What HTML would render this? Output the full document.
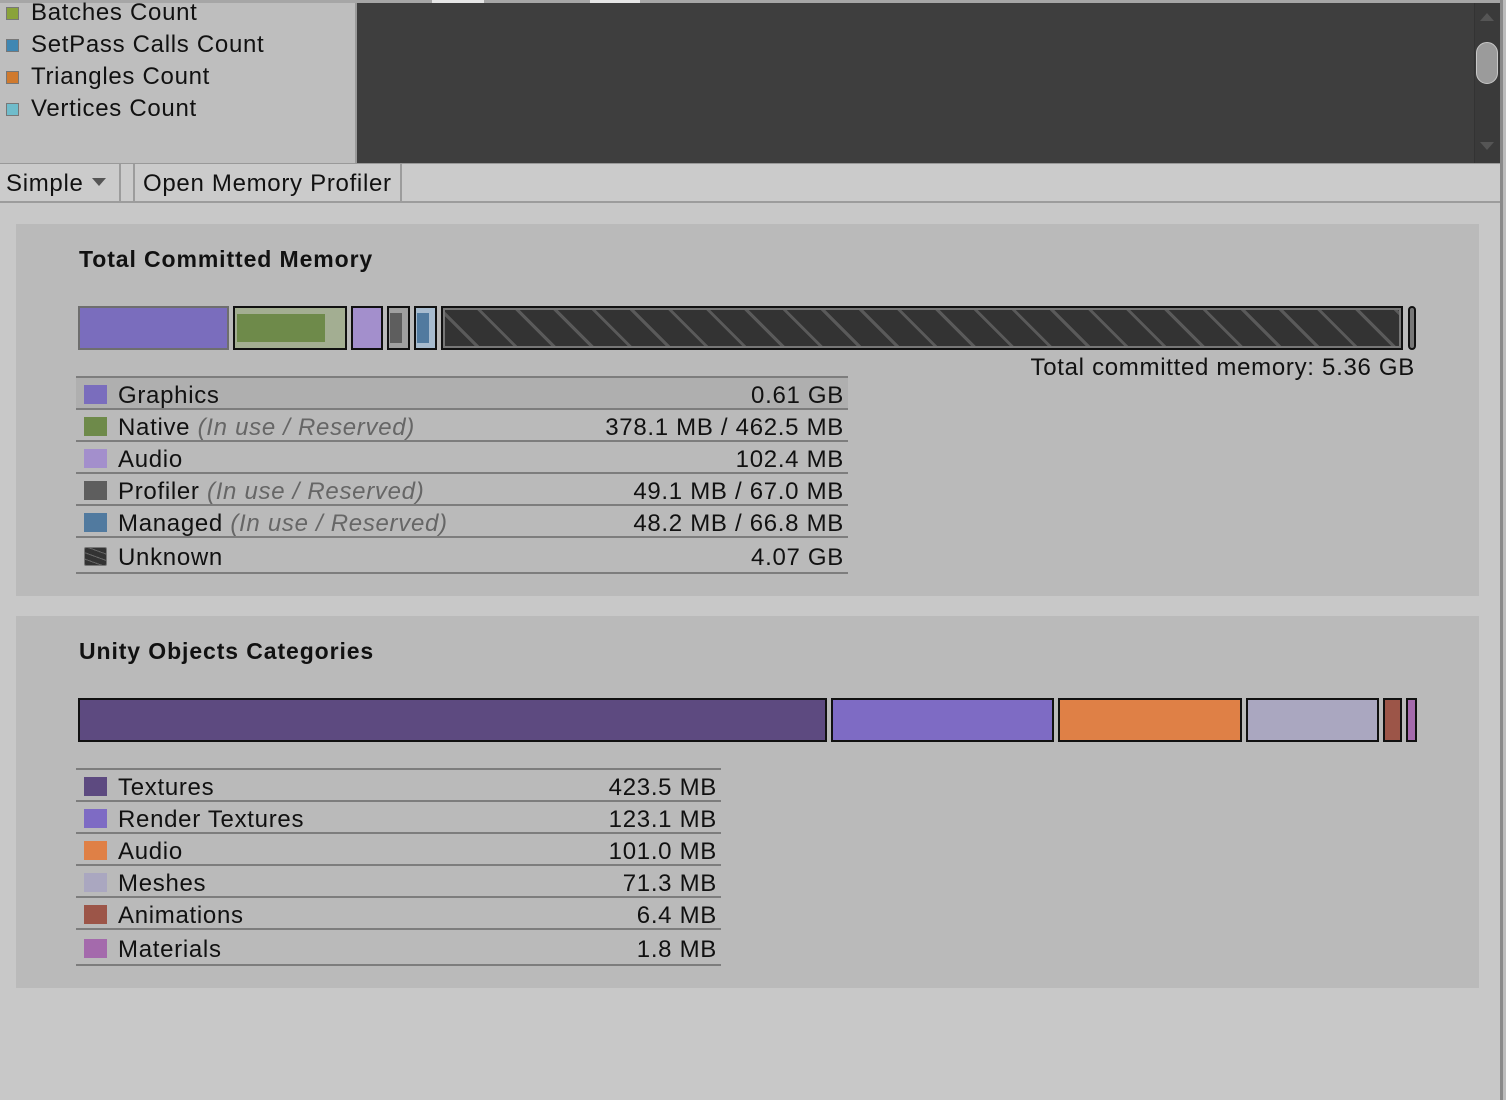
<!DOCTYPE html>
<html><head><meta charset="utf-8"><style>
*{margin:0;padding:0;box-sizing:border-box}
body{width:1506px;height:1100px;overflow:hidden;background:#c8c8c8;font-family:"Liberation Sans",sans-serif;color:#111;position:relative}
.a{position:absolute}
.t{font-size:24px;line-height:32px;white-space:nowrap;letter-spacing:0.7px}
.sw{position:absolute;width:13px;height:13px;border:1px solid #777}
.row{position:absolute;height:32px;border-bottom:2px solid #7d7d7d}
.row .n{position:absolute;left:42px;top:2px;font-size:24px;line-height:32px;white-space:nowrap;letter-spacing:0.7px}
.row .v{position:absolute;right:4px;top:2px;font-size:24px;line-height:32px;white-space:nowrap;letter-spacing:0.7px}
.row .c{position:absolute;left:8px;top:7px;width:23px;height:19px}
.i{color:#666;font-style:italic}
.seg{position:absolute;border:2px solid #111}
</style></head><body>
<div class="a" style="left:0;top:0;width:1506px;height:3px;background:#a6a6a6"></div>
<div class="a" style="left:432px;top:0;width:52px;height:3px;background:#e6e6e6"></div>
<div class="a" style="left:590px;top:0;width:50px;height:3px;background:#e6e6e6"></div>
<div class="a" style="left:0;top:3px;width:355px;height:160px;background:#bebebe"></div>
<div class="a" style="left:355px;top:3px;width:2px;height:160px;background:#9a9a9a"></div>
<div class="sw" style="left:6px;top:7px;background:#8aa33a"></div>
<div class="a t" style="left:31px;top:-3px">Batches Count</div>
<div class="sw" style="left:6px;top:39px;background:#3f87b3"></div>
<div class="a t" style="left:31px;top:29px">SetPass Calls Count</div>
<div class="sw" style="left:6px;top:71px;background:#d07a2e"></div>
<div class="a t" style="left:31px;top:61px">Triangles Count</div>
<div class="sw" style="left:6px;top:103px;background:#6fbccb"></div>
<div class="a t" style="left:31px;top:93px">Vertices Count</div>
<div class="a" style="left:357px;top:3px;width:1143px;height:160px;background:#3e3e3e"></div>
<div class="a" style="left:1474px;top:3px;width:26px;height:160px;background:#3a3a3a;border-left:1px solid #333"></div>
<div class="a" style="left:1480px;top:13px;width:0;height:0;border-left:7px solid transparent;border-right:7px solid transparent;border-bottom:8px solid #555"></div>
<div class="a" style="left:1480px;top:142px;width:0;height:0;border-left:7px solid transparent;border-right:7px solid transparent;border-top:8px solid #555"></div>
<div class="a" style="left:1476px;top:42px;width:22px;height:42px;background:#9b9b9b;border:1px solid #c8c8c8;border-radius:11px"></div>
<div class="a" style="left:1500px;top:0;width:3px;height:1100px;background:#8a8a8a"></div>
<div class="a" style="left:1503px;top:0;width:3px;height:1100px;background:#bdbdbd"></div>
<div class="a" style="left:0;top:163px;width:1500px;height:40px;background:#cbcbcb;border-top:1px solid #999;border-bottom:2px solid #9c9c9c"></div>
<div class="a t" style="left:6px;top:168px">Simple</div>
<div class="a" style="left:92px;top:178px;width:0;height:0;border-left:7px solid transparent;border-right:7px solid transparent;border-top:8px solid #555"></div>
<div class="a" style="left:119px;top:164px;width:2px;height:38px;background:#9c9c9c"></div>
<div class="a" style="left:133px;top:164px;width:2px;height:38px;background:#9c9c9c"></div>
<div class="a t" style="left:143px;top:168px">Open Memory Profiler</div>
<div class="a" style="left:400px;top:164px;width:2px;height:38px;background:#9c9c9c"></div>

<div class="a" style="left:16px;top:224px;width:1463px;height:372px;background:#bababa"></div>
<div class="a" style="left:79px;top:245px;font-size:23px;font-weight:bold;line-height:28px;letter-spacing:0.9px">Total Committed Memory</div>
<div class="seg" style="left:78px;top:306px;width:151px;height:44px;background:#7a6dbd;border-color:#6e6e6e"></div>
<div class="seg" style="left:233px;top:306px;width:114px;height:44px;background:#a3ae92"><div class="a" style="left:2px;top:6px;width:88px;height:28px;background:#6e8a4a"></div></div>
<div class="seg" style="left:351px;top:306px;width:32px;height:44px;background:#a38fcc"></div>
<div class="seg" style="left:387px;top:306px;width:23px;height:44px;background:#a0a0a0"><div class="a" style="left:1px;top:5px;width:12px;height:30px;background:#5e5e5e"></div></div>
<div class="seg" style="left:414px;top:306px;width:23px;height:44px;background:#a8bccf"><div class="a" style="left:1px;top:5px;width:12px;height:30px;background:#517a9f"></div></div>
<div class="seg" style="left:441px;top:306px;width:962px;height:44px;background:repeating-linear-gradient(45deg,#333 0 24px,#5a5a5a 24px 27px);box-shadow:inset 0 0 0 2px #777"></div>
<div class="a" style="left:1408px;top:306px;width:8px;height:44px;background:#777;border:2px solid #111;border-radius:4px"></div>
<div class="a t" style="right:91px;top:352px">Total committed memory: 5.36 GB</div>

<div class="a" style="left:76px;top:376px;width:772px;height:2px;background:#7d7d7d"></div>
<div class="row" style="left:76px;top:378px;width:772px;background:#afafaf"><div class="c" style="background:#7a6dbd"></div><div class="n">Graphics</div><div class="v">0.61 GB</div></div>
<div class="row" style="left:76px;top:410px;width:772px"><div class="c" style="background:#6e8a4a"></div><div class="n">Native <span class="i">(In use / Reserved)</span></div><div class="v">378.1 MB / 462.5 MB</div></div>
<div class="row" style="left:76px;top:442px;width:772px"><div class="c" style="background:#a38fcc"></div><div class="n">Audio</div><div class="v">102.4 MB</div></div>
<div class="row" style="left:76px;top:474px;width:772px"><div class="c" style="background:#5e5e5e"></div><div class="n">Profiler <span class="i">(In use / Reserved)</span></div><div class="v">49.1 MB / 67.0 MB</div></div>
<div class="row" style="left:76px;top:506px;width:772px"><div class="c" style="background:#517a9f"></div><div class="n">Managed <span class="i">(In use / Reserved)</span></div><div class="v">48.2 MB / 66.8 MB</div></div>
<div class="row" style="left:76px;top:540px;width:772px;height:34px"><div class="c" style="background:repeating-linear-gradient(20deg,#333 0 5px,#666 5px 6px);border:1px solid #777;border-radius:2px"></div><div class="n">Unknown</div><div class="v">4.07 GB</div></div>

<div class="a" style="left:16px;top:616px;width:1463px;height:372px;background:#bababa"></div>
<div class="a" style="left:79px;top:637px;font-size:23px;font-weight:bold;line-height:28px;letter-spacing:0.9px">Unity Objects Categories</div>
<div class="seg" style="left:78px;top:698px;width:749px;height:44px;background:#5d4a80"></div>
<div class="seg" style="left:831px;top:698px;width:223px;height:44px;background:#7e6bc4"></div>
<div class="seg" style="left:1058px;top:698px;width:184px;height:44px;background:#df8046"></div>
<div class="seg" style="left:1246px;top:698px;width:133px;height:44px;background:#aaa7c0"></div>
<div class="seg" style="left:1383px;top:698px;width:19px;height:44px;background:#9c5548"></div>
<div class="seg" style="left:1406px;top:698px;width:11px;height:44px;background:#a46aac"></div>

<div class="a" style="left:76px;top:768px;width:645px;height:2px;background:#7d7d7d"></div>
<div class="row" style="left:76px;top:770px;width:645px"><div class="c" style="background:#5d4a80"></div><div class="n">Textures</div><div class="v">423.5 MB</div></div>
<div class="row" style="left:76px;top:802px;width:645px"><div class="c" style="background:#7e6bc4"></div><div class="n">Render Textures</div><div class="v">123.1 MB</div></div>
<div class="row" style="left:76px;top:834px;width:645px"><div class="c" style="background:#df8046"></div><div class="n">Audio</div><div class="v">101.0 MB</div></div>
<div class="row" style="left:76px;top:866px;width:645px"><div class="c" style="background:#aaa7c0"></div><div class="n">Meshes</div><div class="v">71.3 MB</div></div>
<div class="row" style="left:76px;top:898px;width:645px"><div class="c" style="background:#9c5548"></div><div class="n">Animations</div><div class="v">6.4 MB</div></div>
<div class="row" style="left:76px;top:932px;width:645px;height:34px"><div class="c" style="background:#a46aac"></div><div class="n">Materials</div><div class="v">1.8 MB</div></div>
</body></html>
